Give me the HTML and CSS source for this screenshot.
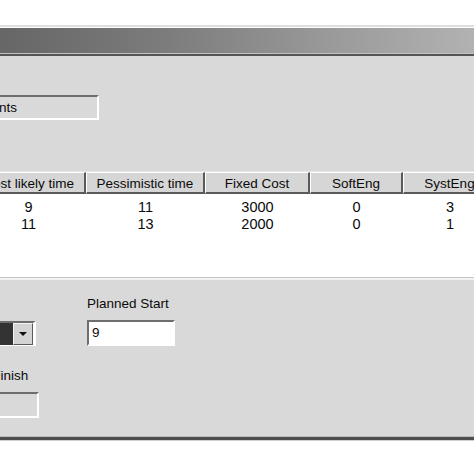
FILE: index.html
```html
<!DOCTYPE html>
<html>
<head>
<meta charset="utf-8">
<link rel="stylesheet" href="styles.css">
</head>
<body>
<div class="window">
  <div class="titlebar"></div>
  <div class="titlesep"></div>
  <div class="top-panel">
    <div class="field disabled name-field"><span>Requirements</span></div>
  </div>
  <div class="grid">
    <div class="grid-head">
      <div class="hcell c1">Most likely time</div>
      <div class="hcell c2">Pessimistic time</div>
      <div class="hcell c3">Fixed Cost</div>
      <div class="hcell c4">SoftEng</div>
      <div class="hcell c5">SystEng</div>
    </div>
    <div class="grid-body">
      <div class="grid-row">
        <div class="cell c1">9</div>
        <div class="cell c2">11</div>
        <div class="cell c3">3000</div>
        <div class="cell c4">0</div>
        <div class="cell c5">3</div>
      </div>
      <div class="grid-row">
        <div class="cell c1">11</div>
        <div class="cell c2">13</div>
        <div class="cell c3">2000</div>
        <div class="cell c4">0</div>
        <div class="cell c5">1</div>
      </div>
    </div>
  </div>
  <div class="form">
    <div class="col left-col">
      <div class="combo">
        <div class="combo-value"></div>
        <div class="combo-btn"><span class="arrow"></span></div>
      </div>
      <div class="label finish-label">Planned Finish</div>
      <div class="field disabled finish-field"></div>
    </div>
    <div class="col right-col">
      <div class="label">Planned Start</div>
      <div class="field start-field">9</div>
    </div>
  </div>
  <div class="form-edge"></div>
</div>
</body>
</html>
```

FILE: styles.css
```css
html, body {
  margin: 0;
  padding: 0;
  background: #ffffff;
  overflow: hidden;
}
body {
  width: 474px;
  height: 474px;
  padding-top: 25px;
  box-sizing: border-box;
  font-family: "Liberation Sans", Arial, sans-serif;
  font-size: 13.5px;
  color: #0a0a0a;
}
.window {
  border-top: 2px solid #dedede;
  padding-top: 1px;
  overflow: hidden;
  width: 474px;
}
.titlebar {
  height: 25px;
  background: linear-gradient(to right, #666666 0%, #7c7c7c 35%, #9a9a9a 70%, #b2b2b2 100%);
}
.titlesep {
  height: 1px;
  background: #c2c2c2;
  border-bottom: 2px solid #555555;
}
.top-panel {
  background: #d9d9d9;
  padding-top: 39px;
  height: 76px;
}
.field {
  box-sizing: border-box;
  height: 25px;
  border-top: 2px solid #6e6e6e;
  border-left: 2px solid #6e6e6e;
  border-right: 2px solid #ffffff;
  border-bottom: 2px solid #ffffff;
  background: #ffffff;
  line-height: 22px;
  padding-left: 3px;
  white-space: nowrap;
  overflow: hidden;
}
.field.disabled {
  background: #d9d9d9;
}
.name-field {
  width: 171px;
  margin-left: -72px;
}
.grid {
  background: #ffffff;
  border-top: 1px solid #e6e6e6;
  border-bottom: 1px solid #c6c6c6;
}
.grid-head {
  display: flex;
  margin-left: -29px;
  height: 22px;
}
.hcell {
  box-sizing: border-box;
  flex: none;
  height: 22px;
  background: #d6d6d6;
  border-top: 1px solid #ffffff;
  border-left: 1px solid #ffffff;
  border-right: 2px solid #5a5a5a;
  border-bottom: 2px solid #5a5a5a;
  text-align: center;
  line-height: 21px;
  white-space: nowrap;
}
.c1 { width: 115px; }
.c2 { width: 119px; }
.c3 { width: 105px; }
.c4 { width: 93px; }
.c5 { width: 94px; }
.grid-body {
  height: 83px;
  padding-top: 5px;
  box-sizing: border-box;
}
.grid-row {
  display: flex;
  margin-left: -29px;
  height: 17px;
}
.cell {
  flex: none;
  text-align: center;
  font-size: 14.5px;
  line-height: 17px;
}
.form {
  background: #d9d9d9;
  border-top: 2px solid #f2f2f2;
  display: flex;
  padding-top: 16px;
  height: 140px;
  border-bottom: 1px solid #bdbdbd;
}
.form-edge {
  height: 3px;
  background: #4e4e4e;
  border-bottom: 1px solid #cfcfcf;
}
.col {
  display: flex;
  flex-direction: column;
}
.left-col {
  margin-left: -61px;
  width: 100px;
}
.right-col {
  margin-left: 48px;
}
.label {
  line-height: 16px;
  white-space: nowrap;
}
.combo {
  margin-top: 25px;
  width: 97px;
  height: 25px;
  box-sizing: border-box;
  display: flex;
  border-top: 2px solid #6e6e6e;
  border-left: 2px solid #6e6e6e;
  border-right: 3px solid #ffffff;
  border-bottom: 1px solid #ffffff;
}
.combo-value {
  flex: 1;
  background: #333333;
}
.combo-btn {
  width: 20px;
  background: #d4d4d4;
  border-top: 1px solid #f4f4f4;
  border-left: 1px solid #f4f4f4;
  border-right: 1px solid #5a5a5a;
  border-bottom: 1px solid #5a5a5a;
  box-sizing: border-box;
  display: flex;
  align-items: center;
  justify-content: center;
}
.arrow {
  width: 0;
  height: 0;
  border-left: 4px solid transparent;
  border-right: 4px solid transparent;
  border-top: 4px solid #111111;
}
.finish-label {
  margin-top: 22px;
}
.finish-field {
  margin-top: 8px;
  width: 100px;
  height: 26px;
}
.start-field {
  margin-top: 8px;
  width: 88px;
  height: 26px;
}
```
